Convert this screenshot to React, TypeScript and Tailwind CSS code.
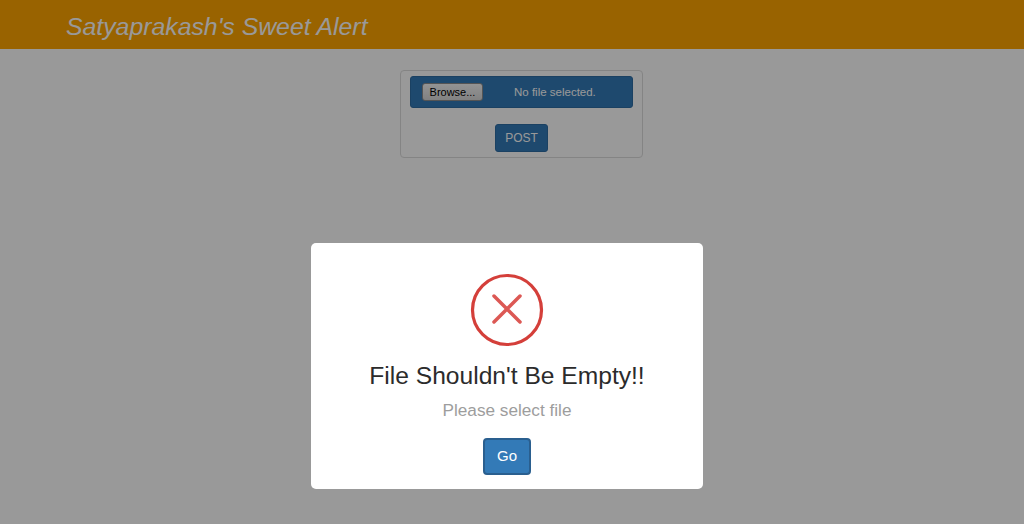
const sans = "font-['Liberation_Sans',Arial,sans-serif]"

const ErrorIcon = () => (
  <svg width="74" height="74" viewBox="0 0 74 74" fill="none">
    <circle cx="37" cy="37" r="34.5" stroke="#d43f3a" strokeWidth="3.2" />
    <path d="M24 23 L50 49 M50 23 L24 49" stroke="#dc5854" strokeWidth="3.5" strokeLinecap="round" />
  </svg>
)

const UploadForm = () => (
  <div className="mt-[21px] ml-[400px] flex h-[88px] w-[243px] flex-col items-center rounded-[4px] border border-[#ddd] px-[9px] pt-[5px]">
    <div className="flex h-[32px] w-full items-center rounded-[3px] border border-[#2e6da4] bg-[#337ab7] pl-[11px]">
      <button className="h-[18px] w-[61px] rounded-[3px] border border-[#8e8e8e] bg-gradient-to-b from-[#f6f6f6] to-[#d8d8d8] pt-px text-[11px] leading-none text-black">
        Browse...
      </button>
      <span className="ml-[31px] pt-px text-[11.5px] text-white">No file selected.</span>
    </div>
    <button className="mt-[16px] h-[28px] w-[53px] rounded-[3px] border border-[#2e6da4] bg-[#337ab7] text-[12px] text-white">
      POST
    </button>
  </div>
)

const AlertModal = () => (
  <div className="absolute inset-0 flex items-start bg-black/40 pt-[243px] pl-[311px]">
    <div className="flex h-[246px] w-[392px] flex-col items-center rounded-[5px] bg-white pt-[30px]">
      <ErrorIcon />
      <h2 className="mt-[14px] text-[24.6px] leading-[30px] font-normal text-[#2b2b2b]">File Shouldn't Be Empty!!</h2>
      <p className="mt-[8px] text-[17.2px] leading-[22px] text-[#9d9d9d]">Please select file</p>
      <button className="mt-[17px] h-[37px] w-[48px] rounded-[4px] border-2 border-[#2a5f8f] bg-[#337ab7] text-[15px] text-white">
        Go
      </button>
    </div>
  </div>
)

export default function App() {
  return (
    <div className={`relative h-[524px] w-[1024px] overflow-hidden bg-white ${sans}`}>
      <header className="flex h-[49px] items-center bg-[#ffa500] pt-[5px] pl-[66px]">
        <h1 className="text-[24.8px] font-normal text-white italic">Satyaprakash's Sweet Alert</h1>
      </header>
      <UploadForm />
      <AlertModal />
    </div>
  )
}
